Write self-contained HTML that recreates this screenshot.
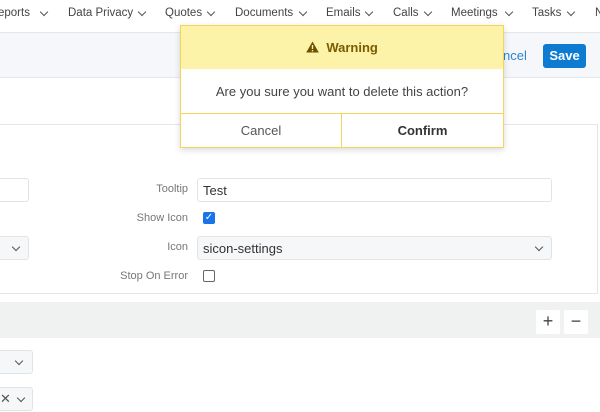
<!DOCTYPE html>
<html><head><style>
*{box-sizing:border-box;margin:0;padding:0}
body{width:600px;height:412px;overflow:hidden;background:#fff;font-family:"Liberation Sans",sans-serif;position:relative;color:#333}
.abs{position:absolute}
.nav{top:0;left:0;width:600px;height:33px;background:#fff;border-bottom:1px solid #e4e7ea;font-size:11.5px;color:#444}
.nav span{position:absolute;top:7px;white-space:nowrap}
.nav i{position:absolute;top:9px;width:6px;height:6px;border-right:1.6px solid #555;border-bottom:1.6px solid #555;transform:rotate(45deg)}
.chev{display:inline-block;width:6px;height:6px;border-right:1.6px solid #555;border-bottom:1.6px solid #555;transform:rotate(45deg)}
.tb{top:33px;left:0;width:600px;height:45px;background:#f5f7fa;border-bottom:1px solid #e4e7ea}
.lbl{font-size:11px;color:#777;text-align:right;width:130px}
.inp{border:1px solid #e1e4e6;border-radius:3px;background:#fff;font-size:13px;padding:4px 5px;color:#333}
.sel{background:#f6f7f8}
.cb{width:12px;height:12px;border:1px solid #666;border-radius:2px;background:#fff}
</style></head><body>
<div class="abs nav">
<span style="left:-2px">eports</span><i style="left:41px"></i>
<span style="left:68px">Data Privacy</span><i style="left:139px"></i>
<span style="left:165px">Quotes</span><i style="left:208px"></i>
<span style="left:235px">Documents</span><i style="left:300px"></i>
<span style="left:326px">Emails</span><i style="left:366px"></i>
<span style="left:393px">Calls</span><i style="left:425px"></i>
<span style="left:451px">Meetings</span><i style="left:506px"></i>
<span style="left:532px">Tasks</span><i style="left:568px"></i>
<span style="left:595px">N</span>
</div>
<div class="abs tb"></div>
<div class="abs" style="left:503px;top:48px;font-size:13px;color:#2a86d0;width:30px;overflow:hidden;white-space:nowrap">ncel</div>
<div class="abs" style="left:543px;top:44px;width:43px;height:24px;background:#0d7bd0;border-radius:3px;color:#fff;font-weight:bold;font-size:13px;text-align:center;line-height:24px">Save</div>

<div class="abs" style="left:-2px;top:124px;width:600px;height:170px;border:1px solid #e4e7ea;background:#fff"></div>
<div class="abs inp" style="left:-5px;top:178px;width:34px;height:24px"></div>
<div class="abs lbl" style="left:58px;top:183px">Tooltip</div>
<div class="abs inp" style="left:197px;top:178px;width:355px;height:24px">Test</div>
<div class="abs lbl" style="left:58px;top:212px">Show Icon</div>
<div class="abs" style="left:203px;top:212px;width:12px;height:12px;background:#1a73e8;border-radius:2px;color:#fff;font-size:10px;line-height:12px;text-align:center">✓</div>
<div class="abs inp sel" style="left:-5px;top:236px;width:34px;height:24px"><i class="chev" style="position:absolute;right:9px;top:7px"></i></div>
<div class="abs lbl" style="left:58px;top:241px">Icon</div>
<div class="abs inp sel" style="left:197px;top:236px;width:355px;height:24px">sicon-settings<i class="chev" style="position:absolute;right:9px;top:7px"></i></div>
<div class="abs lbl" style="left:58px;top:270px">Stop On Error</div>
<div class="abs cb" style="left:203px;top:270px"></div>

<div class="abs" style="left:0;top:302px;width:600px;height:36px;background:#f0f1f1"></div>
<div class="abs" style="left:536px;top:310px;width:24px;height:24px;background:#fff;border-radius:2px;text-align:center;font-size:18px;line-height:23px;color:#444">+</div>
<div class="abs" style="left:564px;top:310px;width:24px;height:24px;background:#fff;border-radius:2px;text-align:center;font-size:18px;line-height:23px;color:#444">−</div>
<div class="abs inp sel" style="left:-5px;top:350px;width:38px;height:24px"><i class="chev" style="position:absolute;right:10px;top:7px"></i></div>
<div class="abs inp sel" style="left:-5px;top:387px;width:38px;height:24px"><span style="position:absolute;left:4px;top:3px;font-size:13px;color:#555">✕</span><i class="chev" style="position:absolute;right:8px;top:7px"></i></div>

<div class="abs" style="left:180px;top:25px;width:324px;height:123px;border:1px solid #f5d45a;background:#fff;box-shadow:0 2px 6px rgba(0,0,0,.15)">
<div style="height:43px;background:#fdf3a8;text-align:center;line-height:43px;font-weight:bold;font-size:13px;color:#7a5c00"><svg width="13" height="12" viewBox="0 0 13 12" style="vertical-align:-1px"><path d="M6.5 0.5 L12.8 11.5 L0.2 11.5 Z" fill="#6b5200"/><rect x="5.8" y="4" width="1.4" height="4" fill="#fdf3a8"/><rect x="5.8" y="9" width="1.4" height="1.4" fill="#fdf3a8"/></svg>&nbsp; Warning</div>
<div style="height:45px;text-align:center;line-height:45px;font-size:13px;color:#444;border-bottom:1px solid #f5d45a">Are you sure you want to delete this action?</div>
<div style="display:flex;height:34px;line-height:34px;font-size:13px;text-align:center">
<div style="width:161px;border-right:1px solid #f5d45a;color:#555">Cancel</div>
<div style="flex:1;font-weight:bold;color:#333">Confirm</div>
</div></div>
</body></html>
